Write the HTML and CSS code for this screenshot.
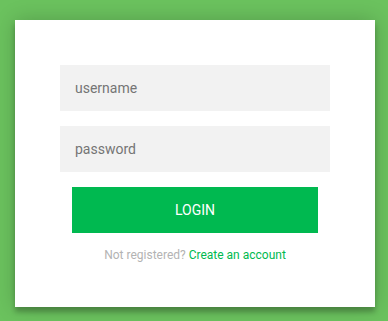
FILE: index.html
```html
<!DOCTYPE html>
<html>
<head>
<meta charset="utf-8">
<link rel="stylesheet" href="styles.css">
</head>
<body>
<div class="page">
  <form class="form">
    <input class="field" type="text" placeholder="username">
    <input class="field" type="password" placeholder="password">
    <button class="btn" type="button">login</button>
    <p class="message">Not registered? <a href="#">Create an account</a></p>
  </form>
</div>
</body>
</html>
```
FILE: styles.css
```css
html, body {
  margin: 0;
  padding: 0;
  background: #6bc25e;
  height: 100%;
}
.page {
  padding: 20px 0 0 15px;
}
.form {
  box-sizing: border-box;
  width: 360px;
  margin: 0;
  padding: 45px;
  background: #ffffff;
  text-align: center;
  box-shadow: 0 0 20px 0 rgba(0,0,0,0.2), 0 5px 5px 0 rgba(0,0,0,0.24);
  font-family: Roboto, sans-serif;
  display: flex;
  flex-direction: column;
  align-items: center;
}
.field {
  display: block;
  box-sizing: border-box;
  width: 270px;
  height: 46px;
  margin: 0 0 15px;
  padding: 15px;
  border: 0;
  outline: 0;
  background: #f2f2f2;
  font-family: Roboto, sans-serif;
  font-size: 14px;
  color: #333;
}
.field::placeholder {
  color: #757575;
}
.btn {
  display: block;
  box-sizing: border-box;
  width: 246px;
  height: 46px;
  margin: 0;
  padding: 15px;
  border: 0;
  outline: 0;
  background: #00b950;
  color: #ffffff;
  font-family: Roboto, sans-serif;
  font-size: 14px;
  text-transform: uppercase;
}
.message {
  margin: 15px 0 0;
  font-size: 12px;
  line-height: 14px;
  color: #b3b3b3;
}
.message a {
  color: #00b950;
  text-decoration: none;
}
```
